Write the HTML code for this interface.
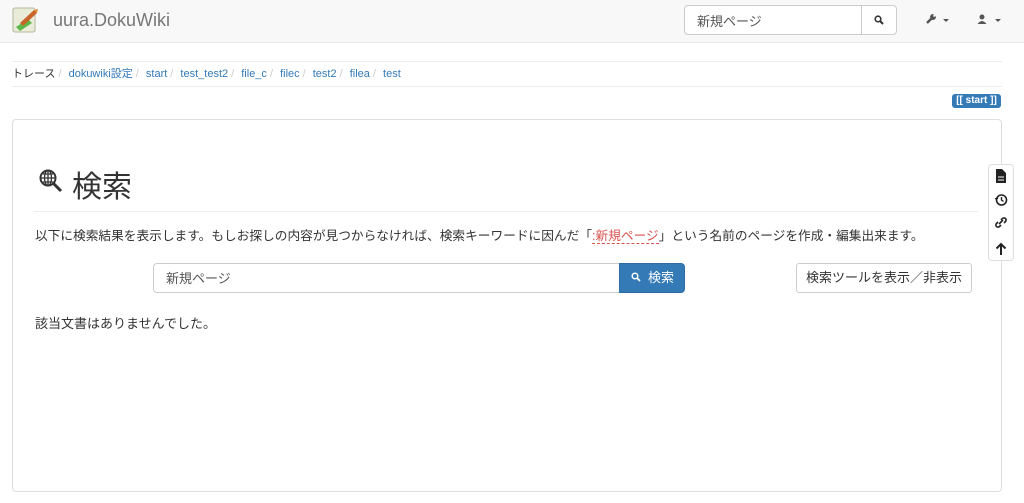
<!DOCTYPE html>
<html><head><meta charset="utf-8"><style>
*{box-sizing:border-box;margin:0;padding:0}
body{width:1024px;height:503px;overflow:hidden;background:#fff;font-family:"Liberation Sans","Noto Sans CJK JP",sans-serif;color:#333;font-size:13px;position:relative}
.nav{position:absolute;left:0;top:0;width:1024px;height:43px;background:#f8f8f8;border-bottom:1px solid #e7e7e7}
.abs{position:absolute}
.bc{position:absolute;left:12px;top:61px;width:990px;height:26px;border-top:1px solid #eee;border-bottom:1px solid #eee;font-size:11px;line-height:24px;color:#333}
.bc a{color:#337ab7}
.bc .s{color:#ccc;margin:0 4px 0 3px}
.panel{position:absolute;left:12px;top:119px;width:990px;height:373px;border:1px solid #ddd;border-radius:4px}
.btn{position:absolute;border:1px solid #ccc;border-radius:3px;background:#fff}
</style></head><body>
<div class="nav">
<svg class="abs" style="left:10px;top:5px" width="30" height="30" viewBox="0 0 30 30"><rect x="3" y="3" width="22" height="24" rx="2" fill="#e8ecd8" stroke="#b8b89a"/><path d="M6 22 L18 14 L22 18 L10 26Z" fill="#5cb848"/><path d="M10 18 L24 5 L27 8 L13 21Z" fill="#c8642a"/><path d="M24 5 L27 8 L28 4Z" fill="#e58a3a"/></svg>
<div class="abs" style="left:53px;top:10px;font-size:18px;color:#777">uura.DokuWiki</div>
<div class="abs" style="left:684px;top:5px;width:213px;height:30px;border:1px solid #ccc;border-radius:4px;background:#fff"></div>
<div class="abs" style="left:861px;top:5px;width:1px;height:30px;background:#ccc"></div>
<div class="abs" style="left:697px;top:11px;font-size:13px;color:#555">新規ページ</div>
<svg class="abs" style="left:874px;top:15px" width="10" height="10" viewBox="0 0 10 10"><circle cx="4" cy="4" r="2.8" fill="none" stroke="#333" stroke-width="1.6"/><path d="M6 6L9 9" stroke="#333" stroke-width="2"/></svg>
<svg class="abs" style="left:925px;top:13px" width="26" height="12" viewBox="0 0 26 12"><path d="M2 10L7 5" stroke="#555" stroke-width="2.5"/><circle cx="8" cy="4" r="3" fill="#555"/><circle cx="9.5" cy="2.5" r="1.3" fill="#f8f8f8"/><path d="M18 6h6l-3 3z" fill="#555"/></svg>
<svg class="abs" style="left:977px;top:13px" width="26" height="12" viewBox="0 0 26 12"><circle cx="5" cy="4" r="2.5" fill="#555"/><path d="M0.5 11 Q5 5 9.5 11Z" fill="#555"/><path d="M18 6h6l-3 3z" fill="#555"/></svg>
</div>
<div class="bc">トレース<span class="s">/</span> <a>dokuwiki設定</a><span class="s">/</span> <a>start</a><span class="s">/</span> <a>test_test2</a><span class="s">/</span> <a>file_c</a><span class="s">/</span> <a>filec</a><span class="s">/</span> <a>test2</a><span class="s">/</span> <a>filea</a><span class="s">/</span> <a>test</a></div>
<div class="abs" style="left:952px;top:94px;width:49px;height:14px;background:#337ab7;border-radius:3px;color:#fff;font-size:10px;font-weight:bold;text-align:center;line-height:14px">[[ start ]]</div>
<div class="panel"></div>
<svg class="abs" style="left:38px;top:168px" width="26" height="26" viewBox="0 0 26 26"><circle cx="10" cy="10" r="7.5" fill="none" stroke="#333" stroke-width="2"/><path d="M3 10h14M10 3v14M5 6h10M5 14h10" stroke="#333" stroke-width="1.3"/><ellipse cx="10" cy="10" rx="3.5" ry="7.5" fill="none" stroke="#333" stroke-width="1.3"/><path d="M15.5 15.5L23 23" stroke="#333" stroke-width="3"/></svg>
<div class="abs" style="left:72px;top:162px;font-size:30px;color:#333">検索</div>
<div class="abs" style="left:34px;top:211px;width:944px;height:1px;background:#eee"></div>
<div class="abs" style="left:35px;top:225px;font-size:12.7px;white-space:nowrap">以下に検索結果を表示します。もしお探しの内容が見つからなければ、検索キーワードに因んだ「<span style="color:#d9534f;border-bottom:1px dashed #d9534f">:新規ページ</span>」という名前のページを作成・編集出来ます。</div>
<div class="abs" style="left:153px;top:263px;width:467px;height:30px;border:1px solid #ccc;border-radius:4px 0 0 4px"></div>
<div class="abs" style="left:166px;top:268px;font-size:13px;color:#555">新規ページ</div>
<div class="abs" style="left:619px;top:263px;width:66px;height:30px;background:#337ab7;border:1px solid #2e6da4;border-radius:0 4px 4px 0;color:#fff;font-size:13px;line-height:28px;padding-left:28px">検索</div>
<svg class="abs" style="left:631px;top:272px" width="10" height="10" viewBox="0 0 10 10"><circle cx="4" cy="4" r="2.8" fill="none" stroke="#fff" stroke-width="1.5"/><path d="M6 6L9 9" stroke="#fff" stroke-width="1.8"/></svg>
<div class="btn" style="left:796px;top:263px;width:176px;height:30px;text-align:center;line-height:28px;font-size:13px">検索ツールを表示／非表示</div>
<div class="abs" style="left:35px;top:313px;font-size:13px">該当文書はありませんでした。</div>
<div class="btn" style="left:988px;top:164px;width:26px;height:97px;border-radius:4px;border-color:#ddd"></div>
<svg class="abs" style="left:993px;top:168px" width="16" height="90" viewBox="0 0 16 90"><path d="M3 1h6l4 4v10H3z" fill="#222"/><path d="M5 9h6M5 12h6" stroke="#fff"/><circle cx="8.5" cy="32" r="5" fill="none" stroke="#222" stroke-width="1.6"/><path d="M8.5 29v3l2 1.5" stroke="#222" stroke-width="1.4" fill="none"/><path d="M1.5 30l2 2.5 2-2.5" fill="#222"/><path d="M6 56l4-4M5 54l-1.5 1.5a2 2 0 0 0 3 3L8 57M11 55l1.5-1.5a2 2 0 0 0-3-3L8 52" stroke="#222" stroke-width="1.6" fill="none"/><path d="M8 87V76M3.5 80.5L8 76l4.5 4.5" stroke="#222" stroke-width="2" fill="none"/></svg>
</body></html>
